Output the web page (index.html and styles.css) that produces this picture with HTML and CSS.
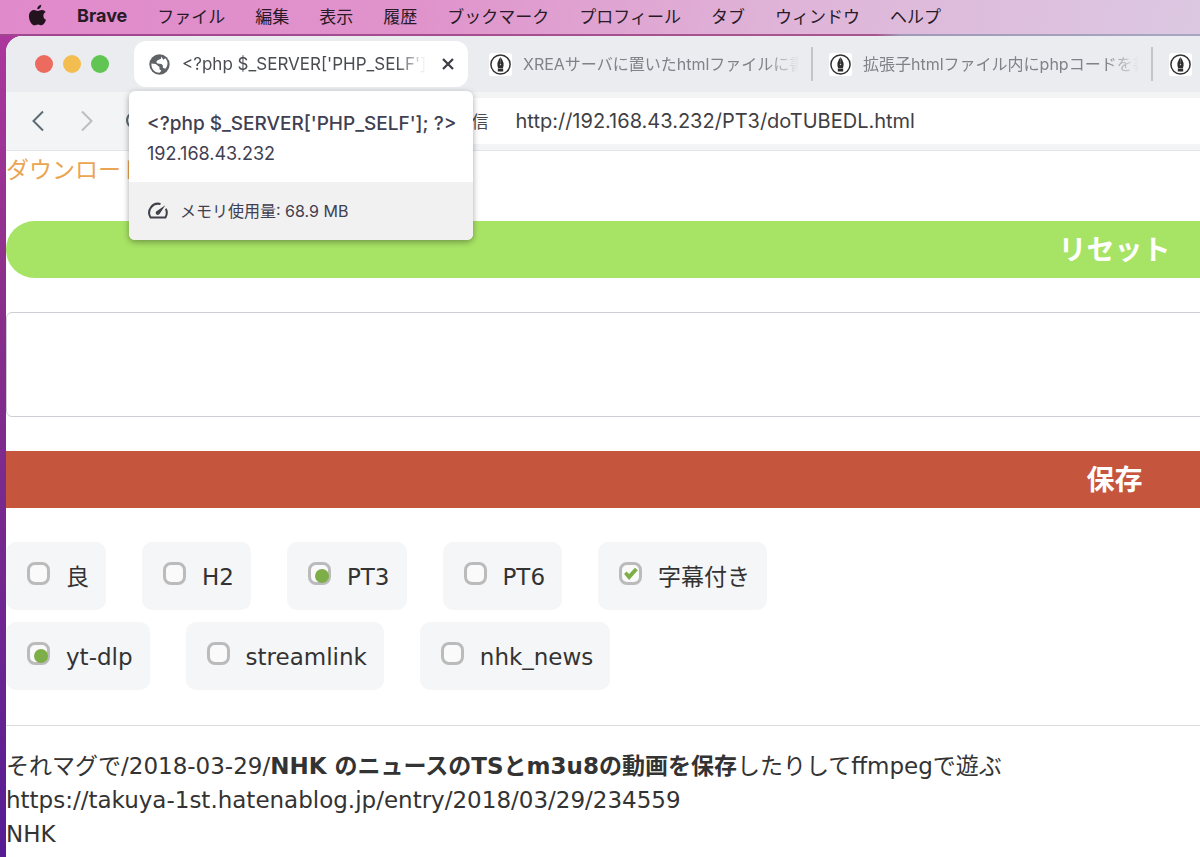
FILE: index.html
```html
<!DOCTYPE html>
<html lang="ja">
<head>
    <meta charset="UTF-8">
    <title>&lt;?php $_SERVER['PHP_SELF']; ?&gt;</title>
    <link rel="stylesheet" href="styles.css">
</head>
<body>
    <svg class="sprite" aria-hidden="true">
        <symbol id="pen" viewBox="0 0 24 24">
            <rect width="24" height="24" rx="3" fill="#fff"/>
            <circle cx="12" cy="12" r="10" fill="none" stroke="#333" stroke-width="1.6"/>
            <path d="M12 4.5L13.6 6.5L15.2 10.5V13L14.6 15.6H9.4L8.8 13V10.5L10.4 6.5Z M9.2 16.2H14.8V19.4H9.2Z" fill="#2e2e2e"/>
            <path d="M12 5V11" stroke="#888" stroke-width=".5"/>
            <circle cx="12" cy="12" r=".7" fill="#ccc"/>
        </symbol>
    </svg>

    <nav class="menubar">
        <button class="apple" aria-label="Apple">
            <svg width="19" height="23" viewBox="0 0 20 24">
                <path d="M13.9 0.6C14.1 3.1 12 5.5 9.8 5.4C9.5 3.1 11.7 0.8 13.9 0.6Z M18.6 8.3C16.9 9.3 16.1 10.6 16.2 12.4C16.3 14.4 17.3 15.8 19 16.6C18.2 18.9 16.4 22.2 14.4 22.3C12.9 22.3 12.3 21.4 10.5 21.4C8.7 21.4 8.1 22.3 6.7 22.3C4.2 22.3 1 17.6 1 12.7C1 8.6 3.6 6.2 6.3 6.2C8 6.2 9.3 7.2 10.3 7.2C11.3 7.2 12.9 6.1 14.9 6.2C16.4 6.3 17.7 6.9 18.6 8.3Z" fill="#22131f"/>
            </svg>
        </button>
        <button class="app-name">Brave</button>
        <button>ファイル</button>
        <button>編集</button>
        <button>表示</button>
        <button>履歴</button>
        <button>ブックマーク</button>
        <button>プロフィール</button>
        <button>タブ</button>
        <button>ウィンドウ</button>
        <button>ヘルプ</button>
    </nav>

    <div class="window">
        <div class="tabstrip">
            <div class="lights">
                <button class="light red" aria-label="閉じる"></button>
                <button class="light yellow" aria-label="しまう"></button>
                <button class="light green" aria-label="拡大"></button>
            </div>
            <div class="tab active">
                <svg width="23" height="23" viewBox="0 0 24 24">
                    <circle cx="12" cy="12" r="10.6" fill="#5f6368"/>
                    <path d="M3.6 11L8 11.5L12 14.5V17L14 18.5L12 20.6C7.500 20.600 3.600 17 3.600 12.500Z" fill="#fff"/>
                    <path d="M14 3.600L13.500 6L10 7.500L8.500 9.500L10 11L14 11.500L15.500 13V15.500L18 16.500C21 13.500 21.300 8.500 18 5.500L16 7Z" fill="#fff"/>
                </svg>
                <button class="tab-title">&lt;?php $_SERVER['PHP_SELF']; ?&gt;</button>
                <button class="tab-close" aria-label="タブを閉じる">
                    <svg width="12" height="12" viewBox="0 0 12 12"><path d="M1 1L11 11M11 1L1 11" stroke="#3b3d42" stroke-width="2.2"/></svg>
                </button>
            </div>
            <div class="tab">
                <svg width="23" height="23"><use href="#pen"/></svg>
                <button class="tab-title">XREAサーバに置いたhtmlファイルに書いたphp</button>
            </div>
            <div class="tab">
                <svg width="23" height="23"><use href="#pen"/></svg>
                <button class="tab-title">拡張子htmlファイル内にphpコードを書いて</button>
            </div>
            <div class="tab">
                <svg width="23" height="23"><use href="#pen"/></svg>
                <button class="tab-title" aria-label="html"></button>
            </div>
        </div>

        <div class="toolbar">
            <button aria-label="戻る">
                <svg width="24" height="24" viewBox="0 0 24 24"><path d="M17 2.5L7.500 12L17 21.500" fill="none" stroke="#5d6c74" stroke-width="2"/></svg>
            </button>
            <button aria-label="進む">
                <svg width="24" height="24" viewBox="0 0 24 24"><path d="M8 2.5L17.500 12L8 21.500" fill="none" stroke="#b9bec3" stroke-width="2"/></svg>
            </button>
            <button aria-label="再読み込み">
                <svg width="24" height="24" viewBox="0 0 24 24"><path d="M18.5 5.5A8 8 0 1 0 21 12" fill="none" stroke="#5d6c74" stroke-width="2"/></svg>
            </button>
            <div class="address">
                <span class="insecure">保護されていない通信</span>
                <input type="text" class="url" aria-label="アドレス" value="http://192.168.43.232/PT3/doTUBEDL.html">
            </div>
        </div>

        <div class="tab-card">
            <div class="card-head">
                <div class="card-title">&lt;?php $_SERVER['PHP_SELF']; ?&gt;</div>
                <div class="card-host">192.168.43.232</div>
            </div>
            <div class="card-foot">
                <svg width="22" height="20" viewBox="0 0 22 20">
                    <path d="M13.5 3A9 9 0 0 0 3.6 16.5H18.4A9 9 0 0 0 18.8 7.8" fill="none" stroke="#3f4048" stroke-width="2"/>
                    <path d="M18.3 4.2L12.7 12.7A2.1 2.1 0 1 1 9.9 9.9Z" fill="#3f4048"/>
                </svg>
                <span>メモリ使用量: 68.9 MB</span>
            </div>
        </div>

        <main class="page">
            <a href="#" class="download">ダウンロード</a>
            <button class="bar reset">リセット</button>
            <textarea class="memo" aria-label="URL"></textarea>
            <button class="bar save">保存</button>

            <div class="options">
                <label class="chip"><input type="radio" name="host">良</label>
                <label class="chip"><input type="radio" name="host">H2</label>
                <label class="chip"><input type="radio" name="host" checked>PT3</label>
                <label class="chip"><input type="radio" name="host">PT6</label>
                <label class="chip"><input type="checkbox" checked>字幕付き</label>
            </div>
            <div class="options">
                <label class="chip"><input type="radio" name="tool" checked>yt-dlp</label>
                <label class="chip"><input type="radio" name="tool">streamlink</label>
                <label class="chip"><input type="radio" name="tool">nhk_news</label>
            </div>

            <hr>
            <p>それマグで/2018-03-29/<b>NHK のニュースのTSとm3u8の動画を保存</b>したりしてffmpegで遊ぶ<br>
            https://takuya-1st.hatenablog.jp/entry/2018/03/29/234559<br>
            NHK</p>
        </main>
    </div>
</body>
</html>
```
FILE: styles.css
```css
* {
    box-sizing: border-box;
}
body {
    margin: 0;
    height: 100vh;
    overflow: hidden;
    display: flex;
    flex-direction: column;
    background: linear-gradient(#b0389f, #8a2f8a 35%, #6d2590 75%, #551c94);
    font-family: Inter, "Noto Sans CJK JP", sans-serif;
}
button {
    padding: 0;
    border: 0;
    background: none;
    color: inherit;
    font: inherit;
    white-space: nowrap;
}
svg {
    display: block;
    flex: none;
}
.sprite {
    position: absolute;
    width: 0;
    height: 0;
}

/* menu bar */
.menubar {
    flex: none;
    display: flex;
    align-items: center;
    gap: 30px;
    height: 36px;
    padding: 0 0 3px 28px;
    background: linear-gradient(100deg, #e18acb, #e093cb 35%, #dfb4d8 65%, #dcc8e2);
    border-bottom: 2px solid;
    border-image: linear-gradient(to right, #a0458f 0, #a8568f 73%, #a09ab8 75%, #a8a6c0) 1;
    color: #281a27;
    font-size: 17px;
}
.app-name {
    font-size: 18px;
    font-weight: 700;
}

/* browser window */
.window {
    position: relative;
    flex: 1;
    margin-left: 6px;
    overflow: hidden;
    background: #fff;
    border-top-left-radius: 16px;
}
.tabstrip {
    display: flex;
    align-items: center;
    height: 56px;
    background: #ebecf0;
    overflow: hidden;
}
.lights {
    flex: none;
    display: flex;
    gap: 10px;
    width: 128px;
    padding-left: 29px;
}
.light {
    width: 18px;
    height: 18px;
    border-radius: 50%;
}
.red {
    background: #ed6a5e;
}
.yellow {
    background: #f4bd4f;
}
.green {
    background: #61c554;
}
.tab {
    flex: none;
    display: flex;
    align-items: center;
    gap: 11px;
    width: 340px;
    height: 34px;
    padding: 0 12px 0 16px;
    border-right: 2px solid #c4c5c8;
    color: #808287;
    font-size: 16px;
}
.tab-title {
    flex: 1;
    overflow: hidden;
    padding-bottom: 2px;
    text-align: left;
    -webkit-mask-image: linear-gradient(to right, #000 88%, transparent);
    mask-image: linear-gradient(to right, #000 88%, transparent);
}
.tab.active {
    width: 334px;
    height: 46px;
    margin-right: 5px;
    padding: 0 14px;
    border: 0;
    border-radius: 12px;
    background: #fff;
    color: #4a4c52;
    font-size: 17px;
}
.active .tab-title {
    padding-bottom: 0;
}
.active .tab-close {
    margin-left: 5px;
}

/* toolbar */
.toolbar {
    display: flex;
    align-items: center;
    gap: 24px;
    height: 59px;
    padding-left: 20px;
    background: #f3f4f6;
    border-bottom: 1px solid #e4e5e8;
}
.address {
    flex: 1;
    display: flex;
    align-items: center;
    gap: 27px;
    height: 46px;
    padding-left: 149px;
    background: #fff;
    border-radius: 8px 0 0 8px;
    color: #4a4b4f;
}
.insecure {
    padding-bottom: 2px;
    font-size: 17px;
    white-space: nowrap;
}
.url {
    flex: 1;
    padding: 0;
    border: 0;
    outline: 0;
    color: #3f4043;
    font: 20px Inter, sans-serif;
}

/* hover card */
.tab-card {
    position: absolute;
    top: 55px;
    left: 123px;
    width: 344px;
    border-radius: 6px;
    overflow: hidden;
    background: #fff;
    box-shadow: 0 2px 6px rgba(0, 0, 0, .35);
    color: #3f4052;
}
.card-head {
    padding: 18px 18px 13px;
    line-height: 30px;
    white-space: nowrap;
}
.card-title {
    font-size: 19px;
    font-weight: 500;
}
.card-host {
    font-size: 18px;
}
.card-foot {
    display: flex;
    align-items: center;
    gap: 11px;
    height: 58px;
    padding-left: 18px;
    background: #f1f1f1;
    font-size: 16px;
}
.card-foot span {
    padding-bottom: 2px;
}

/* page, wider than the visible part of the window */
.page {
    width: 186%;
    color: #333;
    font: 23px/34px "DejaVu Sans", "Noto Sans CJK JP", sans-serif;
}
.download {
    display: block;
    margin-bottom: 34px;
    padding-top: 2px;
    color: #eaa552;
    text-decoration: none;
}
.bar {
    display: block;
    width: 100%;
    height: 57px;
    margin-bottom: 34px;
    padding: 3px 4px 0 0;
    color: #fff;
    font-size: 28px;
    font-weight: 700;
}
.reset {
    background: #a7e365;
    border-radius: 30px;
}
.memo {
    display: block;
    width: 100%;
    height: 105px;
    margin-bottom: 34px;
    border: 1px solid #ccd0d6;
    border-radius: 6px;
    resize: none;
}
.save {
    background: #c5553c;
}
.options {
    display: flex;
    gap: 36px;
    margin-bottom: 12px;
}
.chip {
    display: flex;
    align-items: flex-start;
    gap: 16px;
    padding: 18px 17px 16px 21px;
    border-radius: 10px;
    background: #f5f6f8;
}
.chip input {
    appearance: none;
    width: 23px;
    height: 23px;
    margin: 2px 0 0;
    border: 3px solid #bbb;
    border-radius: 8px;
    background: #fafafa;
}
.chip input:checked::before {
    content: "";
    display: block;
    width: 14px;
    height: 14px;
    margin: 4px 0 0 4px;
    border-radius: 50%;
    background: #7dae48;
}
.chip input[type="checkbox"]:checked::before {
    margin: 2px;
    border-radius: 0;
    clip-path: polygon(0 50%, 17% 32%, 36% 50%, 78% 5%, 98% 24%, 36% 92%);
}
hr {
    margin: 35px 0 23px;
    border: 0;
    border-top: 1px solid #ddd;
}
p {
    margin: 0;
}
```
